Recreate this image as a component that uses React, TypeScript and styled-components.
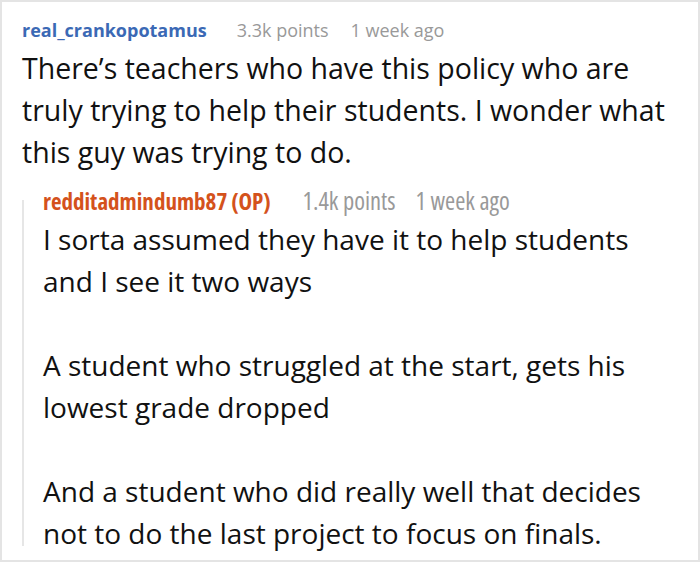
import React from "react";
import styled, { createGlobalStyle } from "styled-components";

const Global = createGlobalStyle`
  html, body { margin: 0; padding: 0; background: #fff; }
  body { font-family: "Open Sans", "Noto Sans", sans-serif; }
`;

const Frame = styled.div`
  box-sizing: border-box;
  width: 700px;
  height: 562px;
  border: 2px solid #e4e4e4;
  padding: 13px 24px 0 20px;
  overflow: hidden;
`;

const Header = styled.div<{ $compact?: boolean }>`
  display: flex;
  align-items: baseline;
  gap: ${(p) => (p.$compact ? "32px" : "30px")};
  font-size: ${(p) => (p.$compact ? "23px" : "18px")};
  line-height: 30px;
  margin-bottom: 2px;
  font-stretch: ${(p) => (p.$compact ? "75%" : "100%")};
`;

const User = styled.span<{ $color: string }>`
  color: ${(p) => p.$color};
  font-weight: 700;
`;

const Meta = styled.span<{ $compact?: boolean }>`
  color: #999;
  display: flex;
  font-size: ${(p) => (p.$compact ? "24.5px" : "inherit")};
  gap: ${(p) => (p.$compact ? "20px" : "22px")};
`;

const Body = styled.div<{ $compact?: boolean }>`
  color: #111;
  font-size: ${(p) => (p.$compact ? "28px" : "28.5px")};
  line-height: 42px;
`;

const Para = styled.p`
  margin: 0 0 42px 0;
  &:last-child { margin-bottom: 0; }
`;

const Reply = styled.div`
  position: relative;
  margin-top: 13px;
  padding-left: 21px;
  &::before {
    content: "";
    position: absolute;
    left: 0;
    top: 14px;
    bottom: 8px;
    width: 2px;
    background: #e6e6e6;
  }
`;

export default function App() {
  return (
    <>
      <Global />
      <Frame>
        <Header>
          <User $color="#3b69b5">real_crankopotamus</User>
          <Meta>
            <span>3.3k points</span>
            <span>1 week ago</span>
          </Meta>
        </Header>
        <Body>
          There’s teachers who have this policy who are truly trying to help their students. I wonder what this guy was trying to do.
        </Body>
        <Reply>
          <Header $compact>
            <User $color="#d4521c">redditadmindumb87 (OP)</User>
            <Meta $compact>
              <span>1.4k points</span>
              <span>1 week ago</span>
            </Meta>
          </Header>
          <Body $compact>
            <Para>I sorta assumed they have it to help students and I see it two ways</Para>
            <Para>A student who struggled at the start, gets his lowest grade dropped</Para>
            <Para>And a student who did really well that decides not to do the last project to focus on finals.</Para>
          </Body>
        </Reply>
      </Frame>
    </>
  );
}
